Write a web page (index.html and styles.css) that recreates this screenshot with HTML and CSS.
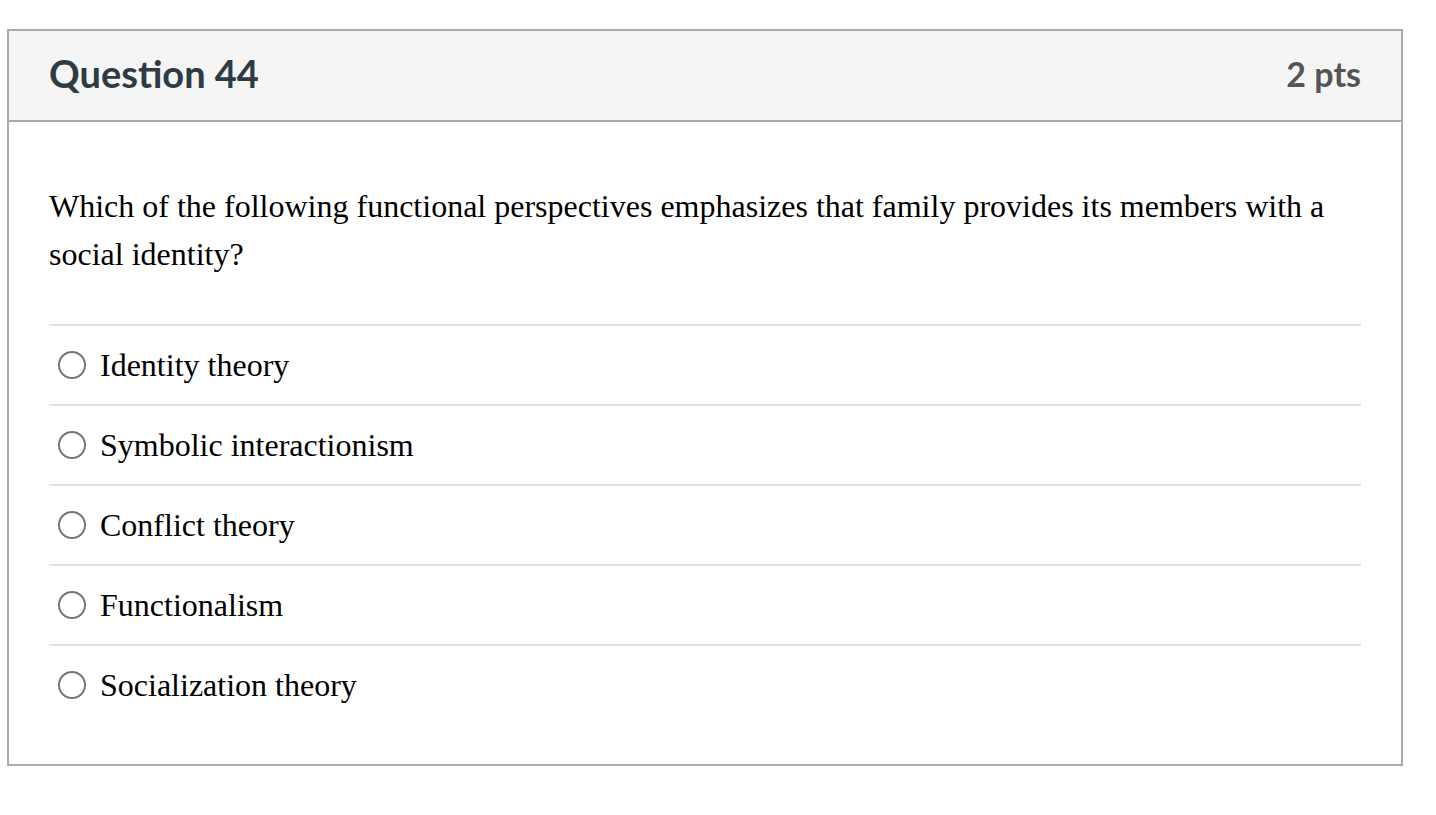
FILE: index.html
```html
<!DOCTYPE html>
<html lang="en">
<head>
<meta charset="utf-8">
<title>Question 44</title>
<link rel="stylesheet" href="styles.css">
</head>
<body>
<div class="question">
  <div class="header">
    <h2 class="title">Question 44</h2>
    <div class="pts">2 pts</div>
  </div>
  <div class="content">
    <p class="text">Which of the following functional perspectives emphasizes that family provides its members with a social identity?</p>
    <div class="answers">
      <label class="answer"><span class="radio"></span><span class="label">Identity theory</span></label>
      <label class="answer"><span class="radio"></span><span class="label">Symbolic interactionism</span></label>
      <label class="answer"><span class="radio"></span><span class="label">Conflict theory</span></label>
      <label class="answer"><span class="radio"></span><span class="label">Functionalism</span></label>
      <label class="answer"><span class="radio"></span><span class="label">Socialization theory</span></label>
    </div>
  </div>
</div>
</body>
</html>
```
FILE: styles.css
```css
html, body { margin: 0; padding: 0; background: #fff; }
body { padding: 29px 0 0 7px; }
.question {
  width: 1392px;
  border: 2px solid #aaaaaa;
  box-sizing: content-box;
}
.header {
  display: flex;
  justify-content: space-between;
  align-items: center;
  height: 89px;
  padding: 0 40px 5px 40px;
  box-sizing: border-box;
  background: #f5f5f5;
  border-bottom: 2px solid #aaaaaa;
  font-family: Lato, "Liberation Sans", sans-serif;
  font-weight: 700;
}
.header { height: 91px; }
.title { margin: 0; font-size: 38px; color: #2d3b45; font-weight: 700; }
.pts { font-size: 34px; color: #555555; }
.content {
  padding: 60px 40px 40px 40px;
  font-family: "Liberation Serif", "Times New Roman", serif;
  color: #000;
}
.text {
  margin: 0 0 46px 0;
  font-size: 32px;
  line-height: 48px;
}
.answer {
  display: flex;
  align-items: center;
  height: 78px;
  border-top: 2px solid #e0e0e0;
  font-size: 32px;
}
.radio {
  width: 24px;
  height: 24px;
  border: 2px solid #777;
  border-radius: 50%;
  margin: 0 14px 0 9px;
  flex: none;
}
```
